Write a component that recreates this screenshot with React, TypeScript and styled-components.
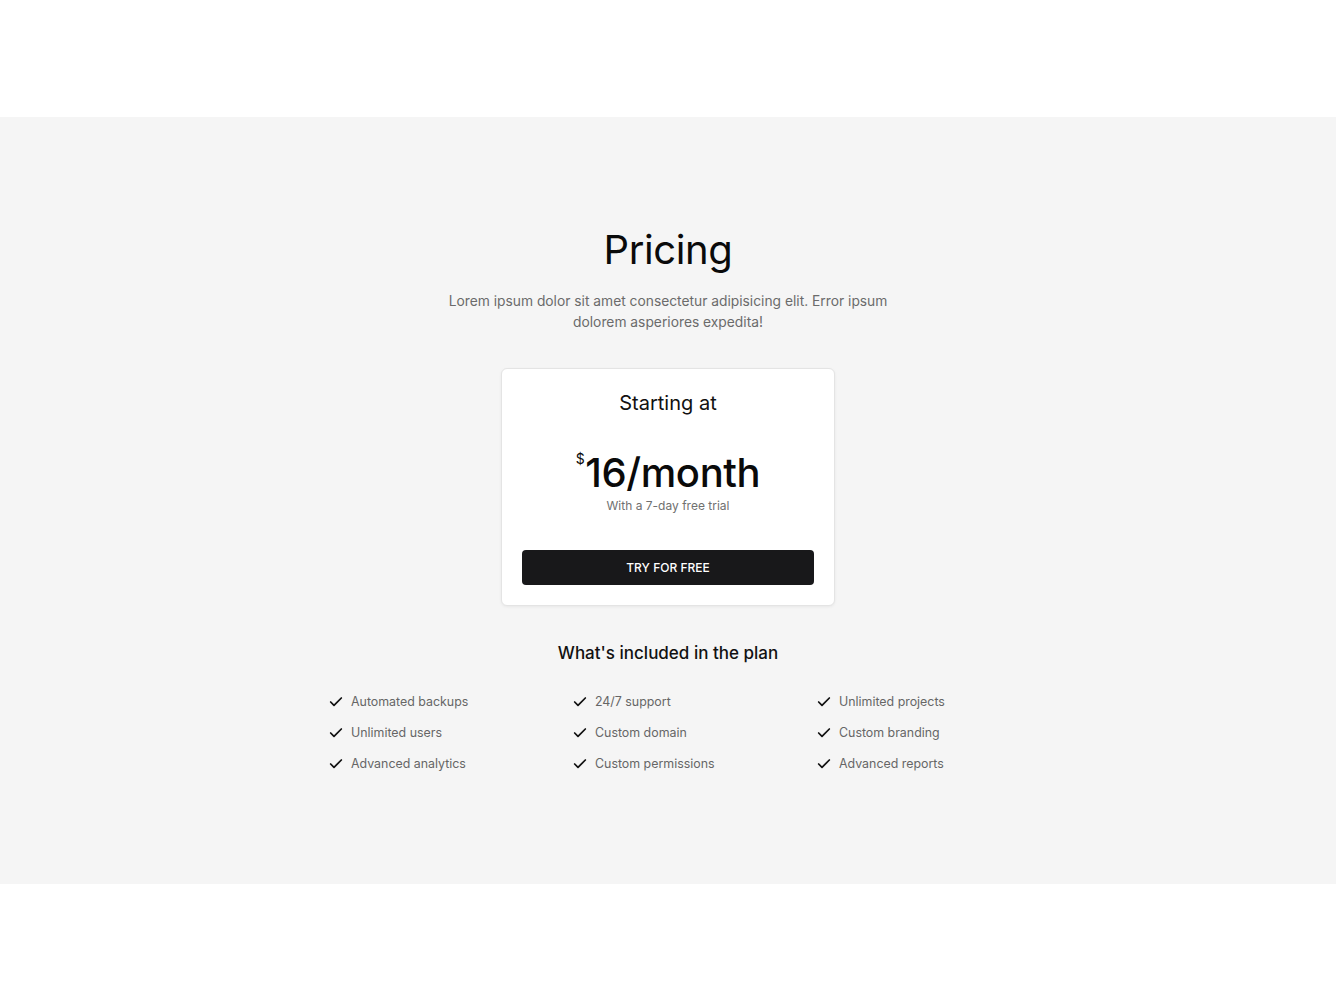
import React from 'react';
import styled, { createGlobalStyle } from 'styled-components';
import { Check } from 'lucide-react';

const GlobalStyle = createGlobalStyle`
  * {
    box-sizing: border-box;
  }

  body {
    margin: 0;
    background: #ffffff;
    font-family: Inter, "Noto Sans", "Liberation Sans", sans-serif;
    color: #111111;
  }
`;

const TopSpacer = styled.div`
  height: 117px;
`;

const Section = styled.section`
  background: #f5f5f5;
  padding: 109px 24px 110px;
  display: flex;
  flex-direction: column;
  align-items: center;
`;

const Title = styled.h1`
  margin: 0;
  font-size: 40px;
  line-height: 48px;
  font-weight: 400;
  color: #0a0a0a;
  letter-spacing: -0.01em;
`;

const Lead = styled.p`
  margin: 17px 0 0;
  max-width: 448px;
  text-align: center;
  font-size: 13.8px;
  line-height: 21px;
  color: #6b6b6b;
`;

const Card = styled.div`
  margin-top: 35px;
  width: 334px;
  padding: 20px;
  background: #ffffff;
  border: 1px solid #e4e4e4;
  border-radius: 6px;
  box-shadow: 0 1px 3px rgba(0, 0, 0, 0.06);
  display: flex;
  flex-direction: column;
  align-items: center;
  text-align: center;
`;

const CardLabel = styled.div`
  font-size: 20px;
  line-height: 28px;
  color: #111111;
`;

const Price = styled.div`
  margin-top: 32px;
  font-size: 40px;
  line-height: 48px;
  font-weight: 500;
  color: #0a0a0a;
  letter-spacing: -0.01em;

  sup {
    font-size: 14px;
    line-height: 1;
    font-weight: 400;
    vertical-align: top;
    position: relative;
    top: 3px;
    margin-right: 1px;
  }
`;

const Trial = styled.div`
  margin-top: 1px;
  font-size: 12px;
  line-height: 16px;
  color: #707070;
`;

const CtaButton = styled.button`
  margin-top: 36px;
  width: 100%;
  height: 35px;
  border: none;
  border-radius: 4px;
  background: #18181a;
  color: #ffffff;
  font-family: inherit;
  font-size: 12px;
  font-weight: 500;
  cursor: pointer;
`;

const IncludedHeading = styled.h2`
  margin: 35px 0 0;
  font-size: 17px;
  line-height: 24px;
  font-weight: 500;
  color: #111111;
`;

const FeatureGrid = styled.ul`
  list-style: none;
  margin: 27px 0 0;
  padding: 0;
  width: 680px;
  display: grid;
  grid-template-columns: repeat(3, 1fr);
  column-gap: 52px;
  row-gap: 11px;
`;

const Feature = styled.li`
  display: flex;
  align-items: center;
  gap: 7px;
  font-size: 12.4px;
  line-height: 20px;
  color: #666666;

  svg {
    flex-shrink: 0;
    color: #111111;
  }
`;

const features = [
  'Automated backups',
  '24/7 support',
  'Unlimited projects',
  'Unlimited users',
  'Custom domain',
  'Custom branding',
  'Advanced analytics',
  'Custom permissions',
  'Advanced reports',
];

export default function App() {
  return (
    <>
      <GlobalStyle />
      <TopSpacer />
      <Section>
        <Title>Pricing</Title>
        <Lead>
          Lorem ipsum dolor sit amet consectetur adipisicing elit. Error ipsum
          dolorem asperiores expedita!
        </Lead>

        <Card>
          <CardLabel>Starting at</CardLabel>
          <Price>
            <sup>$</sup>16/month
          </Price>
          <Trial>With a 7-day free trial</Trial>
          <CtaButton>TRY FOR FREE</CtaButton>
        </Card>

        <IncludedHeading>What's included in the plan</IncludedHeading>
        <FeatureGrid>
          {features.map(f => (
            <Feature key={f}>
              <Check size={16} strokeWidth={2.6} />
              {f}
            </Feature>
          ))}
        </FeatureGrid>
      </Section>
    </>
  );
}
